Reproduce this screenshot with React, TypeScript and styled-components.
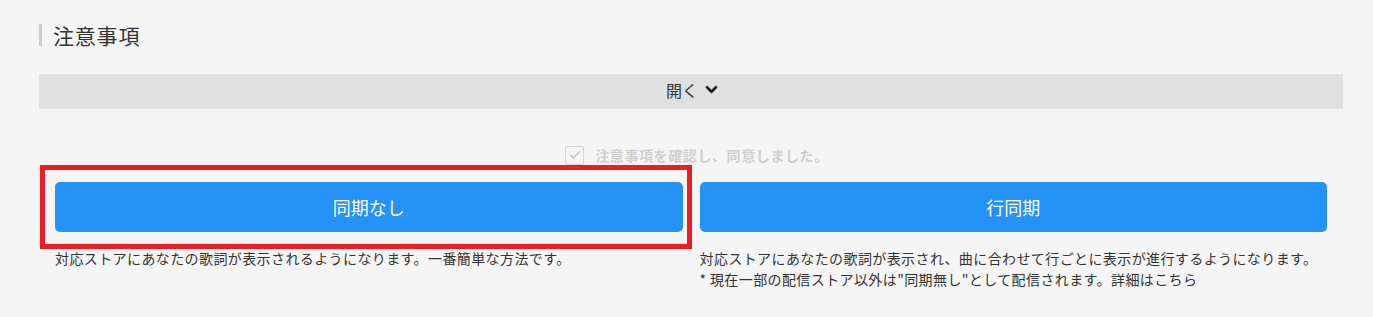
import React from "react";
import styled, { createGlobalStyle } from "styled-components";
import { FaChevronDown } from "react-icons/fa";

const Global = createGlobalStyle`
  html, body {
    margin: 0;
    padding: 0;
    background: #f5f5f5;
  }
  body {
    font-family: "Noto Sans CJK JP", "Noto Sans", sans-serif;
    color: #333;
  }
`;

const Page = styled.div`
  padding: 24px 30px 20px 39px;
  background: #f5f5f5;
`;

const Heading = styled.h2`
  margin: 0;
  border-left: 3px solid #cccccc;
  padding-left: 11px;
  font-size: 21px;
  line-height: 22px;
  font-weight: 400;
  letter-spacing: 0.8px;
  color: #333;
`;

const ToggleBar = styled.button`
  margin-top: 28px;
  width: 100%;
  height: 35px;
  border: none;
  background: #e0e0e0;
  display: flex;
  align-items: center;
  justify-content: center;
  gap: 7px;
  font-family: inherit;
  font-size: 16px;
  color: #333;
  padding: 0 0 4px 2px;
  cursor: pointer;
`;

const Chevron = styled(FaChevronDown)`
  font-size: 13px;
  color: #111;
  stroke: #111;
  stroke-width: 30px;
`;

const AgreeRow = styled.label`
  margin-top: 36px;
  display: flex;
  align-items: center;
  justify-content: center;
  gap: 11px;
  padding-left: 12px;
  font-size: 14px;
  font-weight: 700;
  letter-spacing: 0.6px;
  color: #cfcfcf;
  height: 20px;
`;

const Box = styled.span`
  width: 19px;
  height: 19px;
  box-sizing: border-box;
  border: 1px solid #d4d4d4;
  border-radius: 2px;
  display: flex;
  align-items: center;
  justify-content: center;
`;

const Options = styled.div`
  margin-top: 17px;
  display: grid;
  grid-template-columns: 1fr 1fr;
  column-gap: 17px;
  padding: 0 16px;
`;

const Option = styled.div`
  display: flex;
  flex-direction: column;
`;

const ButtonWrap = styled.div`
  position: relative;
`;

const Highlight = styled.div`
  position: absolute;
  top: -17px;
  left: -15px;
  right: -9px;
  bottom: -17px;
  border: 5px solid #ee1c25;
  pointer-events: none;
`;

const PlanButton = styled.button`
  width: 100%;
  height: 50px;
  border: none;
  border-radius: 5px;
  background: #2592f7;
  color: #fff;
  font-family: inherit;
  font-size: 18px;
  cursor: pointer;
  padding: 0;
`;

const Desc = styled.p`
  margin: 16px 0 0 0;
  font-size: 14px;
  line-height: 21px;
  letter-spacing: 0.4px;
  color: #333;
`;

export default function App() {
  return (
    <>
      <Global />
      <Page>
        <Heading>注意事項</Heading>
        <ToggleBar>
          開く
          <Chevron />
        </ToggleBar>
        <AgreeRow>
          <Box>
            <svg width="12" height="10" viewBox="0 0 12 10">
              <polyline
                points="1.5,5 4.5,8 10.5,1.5"
                fill="none"
                stroke="#c8c8c8"
                strokeWidth="1.8"
              />
            </svg>
          </Box>
          注意事項を確認し、同意しました。
        </AgreeRow>
        <Options>
          <Option>
            <ButtonWrap>
              <PlanButton>同期なし</PlanButton>
              <Highlight />
            </ButtonWrap>
            <Desc>
              対応ストアにあなたの歌詞が表示されるようになります。一番簡単な方法です。
            </Desc>
          </Option>
          <Option>
            <ButtonWrap>
              <PlanButton>行同期</PlanButton>
            </ButtonWrap>
            <Desc>
              対応ストアにあなたの歌詞が表示され、曲に合わせて行ごとに表示が進行するようになります。
              <br />* 現在一部の配信ストア以外は"同期無し"として配信されます。詳細はこちら
            </Desc>
          </Option>
        </Options>
      </Page>
    </>
  );
}
